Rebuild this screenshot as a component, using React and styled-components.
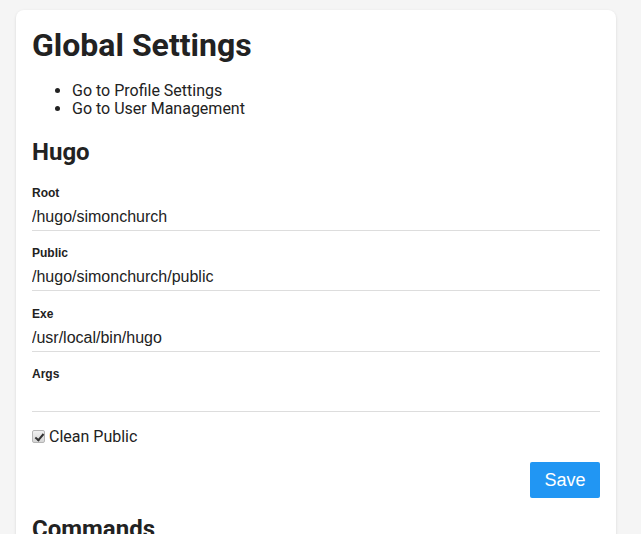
import React from "react";
import styled, { createGlobalStyle } from "styled-components";

const GlobalStyle = createGlobalStyle`
  html, body {
    margin: 0;
    padding: 0;
    background: #f5f5f5;
  }
  body {
    font-family: Roboto, "Liberation Sans", sans-serif;
    color: #222;
  }
`;

const Card = styled.div`
  width: 600px;
  box-sizing: border-box;
  margin: 10px 16px;
  padding: 16px;
  background: #fff;
  border-radius: 8px;
  box-shadow: 0 1px 3px rgba(0, 0, 0, 0.12);
`;

const Title = styled.h1`
  font-size: 32px;
  font-weight: 700;
  margin: 0 0 18px;
`;

const SubTitle = styled.h2`
  font-size: 24px;
  font-weight: 700;
  margin: ${(p) => p.$top || 20}px 0 20px;
`;

const LinkList = styled.ul`
  margin: 16px 0;
  padding-left: 40px;
  font-size: 16px;
  line-height: 18px;
`;

const NavLink = styled.a`
  color: #222;
  text-decoration: none;
`;

const Field = styled.div`
  display: flex;
  flex-direction: column;
  margin-bottom: 15.25px;
`;

const Label = styled.label`
  font-family: "Liberation Sans", Arial, sans-serif;
  font-size: 12px;
  font-weight: 700;
  margin-bottom: 4px;
`;

const TextInput = styled.input`
  font-family: "Liberation Sans", Arial, sans-serif;
  font-size: 16px;
  color: #222;
  border: none;
  border-bottom: 1px solid #ddd;
  padding: 4px 0;
  outline: none;
  background: transparent;
`;

const CheckRow = styled.label`
  display: flex;
  align-items: center;
  font-size: 16px;
`;

const Check = styled.input`
  appearance: none;
  position: relative;
  box-sizing: border-box;
  width: 13px;
  height: 13px;
  margin: 0 4px 0 0;
  border: 1px solid #b5b5b5;
  border-radius: 2px;
  background: linear-gradient(#f0f0f0, #d6d6d6);

  &:checked::after {
    content: "";
    position: absolute;
    left: 3.5px;
    top: 0.5px;
    width: 3px;
    height: 7px;
    border: solid #333;
    border-width: 0 2px 2px 0;
    transform: rotate(40deg);
  }
`;

const Actions = styled.div`
  display: flex;
  justify-content: flex-end;
  margin-top: 16px;
`;

const SaveButton = styled.button`
  font-family: "Liberation Sans", Arial, sans-serif;
  font-size: 18px;
  color: #fff;
  background: #2196f3;
  border: none;
  border-radius: 2px;
  padding: 7.5px 14.5px;
  cursor: pointer;
`;

const fields = [
  { name: "Root", value: "/hugo/simonchurch" },
  { name: "Public", value: "/hugo/simonchurch/public" },
  { name: "Exe", value: "/usr/local/bin/hugo" },
  { name: "Args", value: "" },
];

export default function App() {
  return (
    <>
      <GlobalStyle />
      <Card>
        <Title>Global Settings</Title>
        <LinkList>
          <li>
            <NavLink href="#profile">Go to Profile Settings</NavLink>
          </li>
          <li>
            <NavLink href="#users">Go to User Management</NavLink>
          </li>
        </LinkList>

        <SubTitle>Hugo</SubTitle>
        {fields.map((f) => (
          <Field key={f.name}>
            <Label>{f.name}</Label>
            <TextInput defaultValue={f.value} />
          </Field>
        ))}
        <CheckRow>
          <Check type="checkbox" defaultChecked />
          Clean Public
        </CheckRow>
        <Actions>
          <SaveButton>Save</SaveButton>
        </Actions>

        <SubTitle $top={17}>Commands</SubTitle>
      </Card>
    </>
  );
}
